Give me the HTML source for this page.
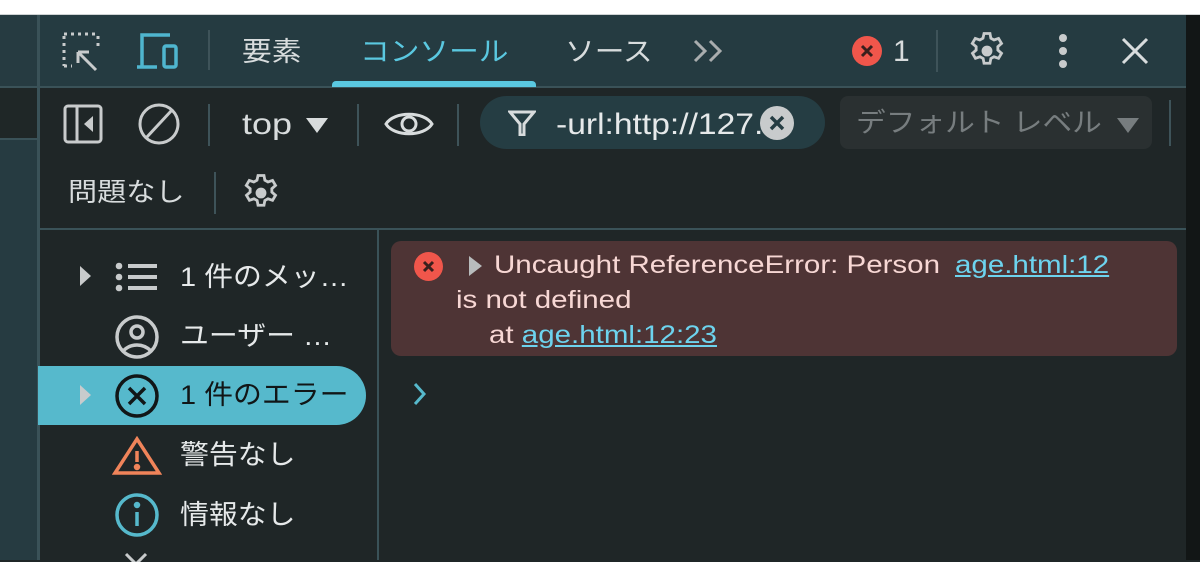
<!DOCTYPE html>
<html><head><meta charset="utf-8"><style>
*{margin:0;padding:0;box-sizing:border-box}
body{width:1200px;height:560px;overflow:hidden;background:#1f2627;position:relative;font-family:"Liberation Sans","Noto Sans CJK JP",sans-serif;color:#dfe3e4}
.a{position:absolute}
.t{position:absolute;white-space:nowrap;line-height:1;transform-origin:left center}
.j{transform:scaleX(1.1)}
.e{transform:scaleX(1.18)}
</style></head><body>
<div class="a" style="left:0;top:0;width:1200px;height:14px;background:#fff"></div>
<div class="a" style="left:0;top:14px;width:1200px;height:1px;background:#cfd3d4"></div>
<div class="a" style="left:0;top:15px;width:37px;height:545px;background:#263b41"></div>
<div class="a" style="left:0;top:88px;width:37px;height:51px;background:#1f2727"></div>
<div class="a" style="left:0;top:86px;width:37px;height:2px;background:#3a5258"></div>
<div class="a" style="left:0;top:138px;width:37px;height:2px;background:#3a5258"></div>
<div class="a" style="left:37px;top:15px;width:3px;height:545px;background:#3a5258"></div>
<div class="a" style="left:40px;top:15px;width:1146px;height:71px;background:#253b41"></div>
<div class="a" style="left:40px;top:86px;width:1146px;height:2px;background:#3a5258"></div>
<div class="a" style="left:1186px;top:15px;width:14px;height:545px;background:#121616"></div>
<svg class="a" style="left:62px;top:32px" width="40" height="40" viewBox="0 0 40 40" fill="none" stroke="#c8cbcc" stroke-width="3"><path d="M2 4v30M2 2h34M36 4v10" stroke-dasharray="3 4"/><path d="M2 34h8" stroke-dasharray="3 4"/><path d="M16 20l18 18M16 20h11M16 20v11"/></svg>
<svg class="a" style="left:136px;top:32px" width="44" height="40" viewBox="0 0 44 40" fill="none" stroke="#4fb6cf" stroke-width="3.5"><path d="M6 28V3h28M1 35h20"/><path d="M6 28v7"/><rect x="28" y="14" width="12" height="21" rx="2"/></svg>
<div class="a" style="left:208px;top:30px;width:2px;height:40px;background:#3e5359"></div>
<div class="t j" style="left:242px;top:39px;font-size:27px;color:#d8dcdd">要素</div>
<div class="t j" style="left:360px;top:39px;font-size:27px;color:#5ac8e0">コンソール</div>
<div class="a" style="left:332px;top:81px;width:204px;height:6px;border-radius:4px 4px 0 0;background:#5ac8e0"></div>
<div class="t j" style="left:565px;top:39px;font-size:27px;color:#d8dcdd">ソース</div>
<svg class="a" style="left:692px;top:38px" width="36" height="26" viewBox="0 0 36 26" fill="none" stroke="#a9adae" stroke-width="3"><path d="M3 3l10 10-10 10M18 3l10 10-10 10"/></svg>
<div class="a" style="left:852px;top:36px;width:30px;height:30px;border-radius:50%;background:#f0564b"></div>
<svg class="a" style="left:852px;top:36px" width="30" height="30"><path d="M10 10l10 10M20 10l-10 10" stroke="#3a1f1d" stroke-width="3"/></svg>
<div class="t" style="left:893px;top:37px;font-size:30px;color:#d8dcdd">1</div>
<div class="a" style="left:936px;top:30px;width:2px;height:42px;background:#3e5359"></div>
<svg class="a" style="left:966px;top:30px" width="42" height="42" viewBox="0 0 24 24" fill="none" stroke="#c8cbcc" stroke-width="1.6"><path d="M10.3 2h3.4l.5 2.7 1.8 1 2.6-.9 1.7 2.9-2.1 1.8v2l2.1 1.8-1.7 2.9-2.6-.9-1.8 1-.5 2.7h-3.4l-.5-2.7-1.8-1-2.6.9-1.7-2.9 2.1-1.8v-2L3.6 7.7l1.7-2.9 2.6.9 1.8-1z"/><circle cx="12" cy="12" r="2.3" fill="#c8cbcc"/></svg>
<div class="a" style="left:1059px;top:34px;width:8px;height:8px;border-radius:50%;background:#c8cbcc"></div>
<div class="a" style="left:1059px;top:47px;width:8px;height:8px;border-radius:50%;background:#c8cbcc"></div>
<div class="a" style="left:1059px;top:60px;width:8px;height:8px;border-radius:50%;background:#c8cbcc"></div>
<svg class="a" style="left:1120px;top:36px" width="30" height="30"><path d="M3 3l24 24M27 3L3 27" stroke="#d8dcdd" stroke-width="3"/></svg>
<svg class="a" style="left:63px;top:104px" width="40" height="40" viewBox="0 0 40 40" fill="none" stroke="#c8cbcc" stroke-width="3"><rect x="2" y="2" width="36" height="36" rx="3"/><path d="M14 2v36"/><path d="M30 12v16l-9-8z" fill="#c8cbcc" stroke="none"/></svg>
<svg class="a" style="left:137px;top:102px" width="44" height="44" fill="none" stroke="#c8cbcc" stroke-width="3"><circle cx="22" cy="22" r="19"/><path d="M9 36L35 8"/></svg>
<div class="a" style="left:208px;top:104px;width:2px;height:42px;background:#3e5359"></div>
<div class="t" style="left:242px;top:110px;font-size:30px;color:#d8dcdd;transform:scaleX(1.2)">top</div>
<svg class="a" style="left:306px;top:118px" width="22" height="16"><path d="M0 0h22L11 15z" fill="#d8dcdd"/></svg>
<div class="a" style="left:357px;top:104px;width:2px;height:42px;background:#3e5359"></div>
<svg class="a" style="left:384px;top:106px" width="50" height="36" fill="none" stroke="#d8dcdd" stroke-width="3"><path d="M2 18C10 5 40 5 48 18 40 31 10 31 2 18z"/><circle cx="25" cy="18" r="7"/></svg>
<div class="a" style="left:457px;top:104px;width:2px;height:42px;background:#3e5359"></div>
<div class="a" style="left:480px;top:96px;width:345px;height:53px;border-radius:27px;background:#253d43"></div>
<svg class="a" style="left:508px;top:110px" width="28" height="26" fill="none" stroke="#d8dcdd" stroke-width="3"><path d="M2 2h24L16 14v11h-4V14z"/></svg>
<div class="a" style="left:554px;top:104px;width:236px;height:40px;overflow:hidden"><div class="t" style="left:2px;top:6px;font-size:30px;color:#e6e9ea;transform:scaleX(1.12)">-url:http://127.0.0.1</div></div>
<div class="a" style="left:760px;top:106px;width:34px;height:34px;border-radius:50%;background:#c8cbcc"></div>
<svg class="a" style="left:760px;top:106px" width="34" height="34"><path d="M11 11l12 12M23 11L11 23" stroke="#253d43" stroke-width="3.5"/></svg>
<div class="a" style="left:840px;top:96px;width:312px;height:53px;border-radius:8px;background:#2a3031"></div>
<div class="t j" style="left:856px;top:110px;font-size:27px;color:#777d7f">デフォルト レベル</div>
<svg class="a" style="left:1117px;top:118px" width="22" height="16"><path d="M0 0h22L11 15z" fill="#777d7f"/></svg>
<div class="a" style="left:1169px;top:100px;width:2px;height:46px;background:#3e5359"></div>
<div class="t" style="left:68px;top:179px;font-size:26px;color:#d8dcdd;transform:scaleX(1.12)">問題なし</div>
<div class="a" style="left:214px;top:172px;width:2px;height:42px;background:#3e5359"></div>
<svg class="a" style="left:240px;top:172px" width="42" height="42" viewBox="0 0 24 24" fill="none" stroke="#c8cbcc" stroke-width="1.6"><path d="M10.3 2h3.4l.5 2.7 1.8 1 2.6-.9 1.7 2.9-2.1 1.8v2l2.1 1.8-1.7 2.9-2.6-.9-1.8 1-.5 2.7h-3.4l-.5-2.7-1.8-1-2.6.9-1.7-2.9 2.1-1.8v-2L3.6 7.7l1.7-2.9 2.6.9 1.8-1z"/><circle cx="12" cy="12" r="2.3" fill="#c8cbcc"/></svg>
<div class="a" style="left:40px;top:228px;width:1146px;height:2px;background:#3a5258"></div>
<div class="a" style="left:377px;top:230px;width:2px;height:330px;background:#3a5258"></div>
<div class="a" style="left:38px;top:366px;width:328px;height:59px;border-radius:0 30px 30px 0;background:#56b9cc"></div>
<svg class="a" style="left:80px;top:266px" width="12" height="20"><path d="M0 0l11 10L0 20z" fill="#c8cbcc"/></svg>
<svg class="a" style="left:80px;top:385px" width="12" height="20"><path d="M0 0l11 10L0 20z" fill="#c8cbcc"/></svg>
<svg class="a" style="left:114px;top:262px" width="44" height="32" fill="#c8cbcc"><circle cx="5" cy="4" r="3.3"/><circle cx="5" cy="15" r="3.3"/><circle cx="5" cy="26" r="3.3"/><rect x="14" y="2" width="29" height="4"/><rect x="14" y="13" width="29" height="4"/><rect x="14" y="24" width="29" height="4"/></svg>
<div class="t" style="left:180px;top:264px;font-size:27px;color:#e6e9ea;transform:scaleX(1.07)">1 件のメッ…</div>
<svg class="a" style="left:114px;top:314px" width="46" height="46" fill="none" stroke="#c8cbcc" stroke-width="3.5"><circle cx="23" cy="23" r="20"/><circle cx="23" cy="18" r="6"/><path d="M9 37c8-8 20-8 28 0"/></svg>
<div class="t" style="left:180px;top:323px;font-size:27px;color:#e6e9ea;transform:scaleX(1.07)">ユーザー …</div>
<svg class="a" style="left:114px;top:373px" width="46" height="46" fill="none" stroke="#111617" stroke-width="3.5"><circle cx="23" cy="23" r="20"/><path d="M15 15l16 16M31 15L15 31"/></svg>
<div class="t" style="left:180px;top:382px;font-size:27px;color:#111617;transform:scaleX(1.07)">1 件のエラー</div>
<svg class="a" style="left:112px;top:436px" width="50" height="40" fill="none" stroke="#f0845a" stroke-width="3.5"><path d="M25 3L3 37h44z"/><path d="M25 15v11" /><circle cx="25" cy="31" r="1.5" fill="#f0845a"/></svg>
<div class="t" style="left:180px;top:442px;font-size:27px;color:#e6e9ea;transform:scaleX(1.07)">警告なし</div>
<svg class="a" style="left:114px;top:492px" width="46" height="46" fill="none" stroke="#56b9cc" stroke-width="3.5"><circle cx="23" cy="23" r="20"/><path d="M23 20v14"/><circle cx="23" cy="13" r="1.5" fill="#56b9cc"/></svg>
<div class="t" style="left:180px;top:502px;font-size:27px;color:#e6e9ea;transform:scaleX(1.07)">情報なし</div>
<svg class="a" style="left:124px;top:552px" width="30" height="10"><path d="M2 2l10 10M22 2L12 12" stroke="#c8cbcc" stroke-width="3"/></svg>
<div class="a" style="left:391px;top:241px;width:786px;height:115px;border-radius:10px;background:#4e3435"></div>
<div class="a" style="left:414px;top:252px;width:29px;height:29px;border-radius:50%;background:#f0564b"></div>
<svg class="a" style="left:414px;top:252px" width="29" height="29"><path d="M10 10l9 9M19 10l-9 9" stroke="#3a1f1d" stroke-width="3"/></svg>
<svg class="a" style="left:469px;top:256px" width="14" height="20"><path d="M0 0l13 10L0 20z" fill="#b8bcbd"/></svg>
<div class="t e" style="left:494px;top:253px;font-size:25px;color:#f7d7d4">Uncaught ReferenceError: Person</div>
<div class="t e" style="left:955px;top:253px;font-size:25px;color:#6dd3ee;text-decoration:underline">age.html:12</div>
<div class="t e" style="left:456px;top:288px;font-size:25px;color:#f7d7d4">is not defined</div>
<div class="t e" style="left:489px;top:323px;font-size:25px;color:#f7d7d4">at <span style="color:#6dd3ee;text-decoration:underline">age.html:12:23</span></div>
<svg class="a" style="left:413px;top:382px" width="14" height="24"><path d="M2 2l9 10-9 10" fill="none" stroke="#56b9cc" stroke-width="3"/></svg>
</body></html>
